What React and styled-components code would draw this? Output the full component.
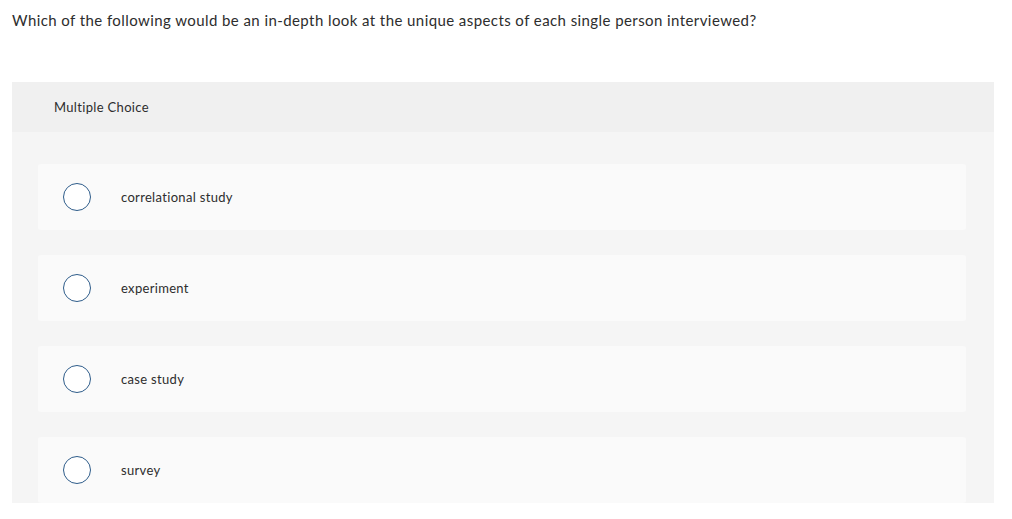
import styled, { createGlobalStyle } from "styled-components";

const GlobalStyle = createGlobalStyle`
  body {
    margin: 0;
    background: #ffffff;
    font-family: "Lato", "Open Sans", sans-serif;
    color: #333333;
  }
`

const Page = styled.div`
  padding: 10px 18px 0 12px;
`

const Question = styled.p`
  margin: 0;
  font-size: 15px;
  line-height: 20px;
  letter-spacing: 0.42px;
  color: #2d2d2d;
`

const Panel = styled.section`
  margin-top: 52px;
  background: #f5f5f5;
`

const PanelHeader = styled.div`
  height: 50px;
  padding-left: 42px;
  display: flex;
  align-items: center;
  background: #f0f0f0;
  font-size: 13px;
  letter-spacing: 0.33px;
  color: #2d2d2d;
`

const Options = styled.div`
  padding: 32px 28px 0 26px;
  display: flex;
  flex-direction: column;
  gap: 25px;
`

const Option = styled.label`
  height: 66px;
  display: flex;
  align-items: center;
  background: #fafafa;
  border-radius: 3px;
  cursor: pointer;
`

const Radio = styled.span`
  width: 26px;
  height: 26px;
  margin-left: 25px;
  border: 1.5px solid #2e5c8a;
  border-radius: 50%;
  background: #ffffff;
  flex-shrink: 0;
`

const OptionText = styled.span`
  margin-left: 30px;
  font-size: 13px;
  letter-spacing: 0.32px;
  color: #2d2d2d;
`

const choices = ["correlational study", "experiment", "case study", "survey"];

function App() {
  return (
    <>
      <GlobalStyle />
      <Page>
        <Question>
          Which of the following would be an in-depth look at the unique aspects of each single person interviewed?
        </Question>
        <Panel>
          <PanelHeader>Multiple Choice</PanelHeader>
          <Options>
            {choices.map((c) => (
              <Option key={c}>
                <Radio />
                <OptionText>{c}</OptionText>
              </Option>
            ))}
          </Options>
        </Panel>
      </Page>
    </>
  )
}

export default App
